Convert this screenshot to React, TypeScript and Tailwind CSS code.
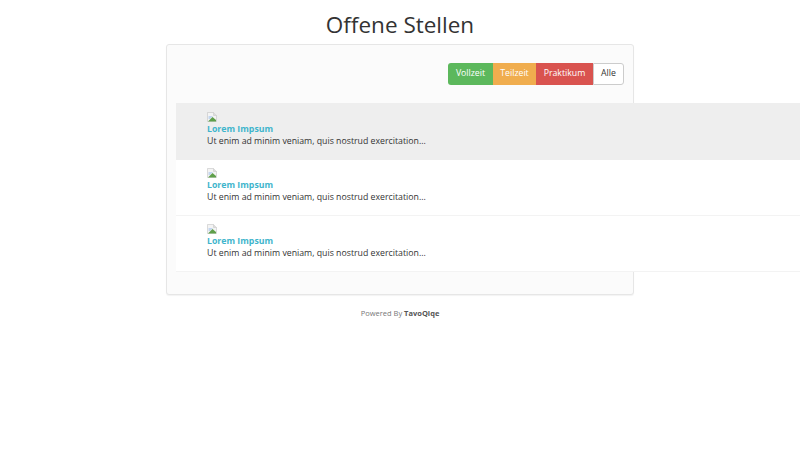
const jobs = [1, 2, 3];

function BrokenImage() {
  return (
    <svg width="10" height="10" viewBox="0 0 10 10" className="block">
      <path d="M0.5 0.5H6.5L9.5 3.5V9.5H0.5Z" fill="#f4f4f4" stroke="#c4c4c4" strokeWidth="0.6" />
      <path d="M6.5 0.5V3.5H9.5" fill="#ddd" stroke="#c4c4c4" strokeWidth="0.5" />
      <path d="M1.5 4H6L3 7H1.5Z" fill="#c3d6f0" />
      <path d="M1 9.5L5.5 5L9 8V9.5Z" fill="#5f9f4a" />
    </svg>
  );
}

export default function App() {
  return (
    <div className="h-[450px] overflow-hidden bg-white font-['Open_Sans',sans-serif] text-[#333]">
      <h1 className="pt-[9px] text-center text-[22.5px] leading-[32px] text-[#333]">Offene Stellen</h1>

      <div className="mx-auto mt-[3px] h-[251px] w-[468px] rounded-[3px] border border-[#e6e6e6] bg-[#fbfbfb] pl-[9px] pr-[9px] pt-[18px] shadow-[0_1px_1px_rgba(0,0,0,0.05)]">
        <div className="flex justify-end">
          <div className="flex h-[22px] text-[8.75px] leading-[21px] text-white">
            <span className="w-[45px] rounded-l-[3px] bg-[#5cb85c] text-center">Vollzeit</span>
            <span className="w-[43px] bg-[#f0ad4e] text-center">Teilzeit</span>
            <span className="w-[57px] bg-[#d9534f] text-center">Praktikum</span>
            <span className="w-[31px] rounded-r-[3px] border border-[#ccc] bg-white text-center leading-[19px] text-[#333]">Alle</span>
          </div>
        </div>

        {/* list runs past the card on the right, same as the original */}
        <div className="mt-[18px] w-[640px]">
          {jobs.map((job, i) => (
            <div
              key={job}
              className={`border-b pl-[31px] ${
                i === 0 ? "h-[57px] border-[#eee] bg-[#eee] pt-[9px]" : "h-[56px] border-[#f3f3f3] bg-white pt-[8px]"
              }`}
            >
              <BrokenImage />
              <div className="mt-[1px] text-[8.75px] leading-[12px] font-bold text-[#3fb5cc]">Lorem Impsum</div>
              <div className="text-[8.75px] leading-[12px] text-[#333]">Ut enim ad minim veniam, quis nostrud exercitation...</div>
            </div>
          ))}
        </div>
      </div>

      <div className="mt-[12px] text-center text-[7.5px] leading-[12px] text-[#777]">
        Powered By <span className="font-bold text-[#555]">TavoQiqe</span>
      </div>
    </div>
  );
}
